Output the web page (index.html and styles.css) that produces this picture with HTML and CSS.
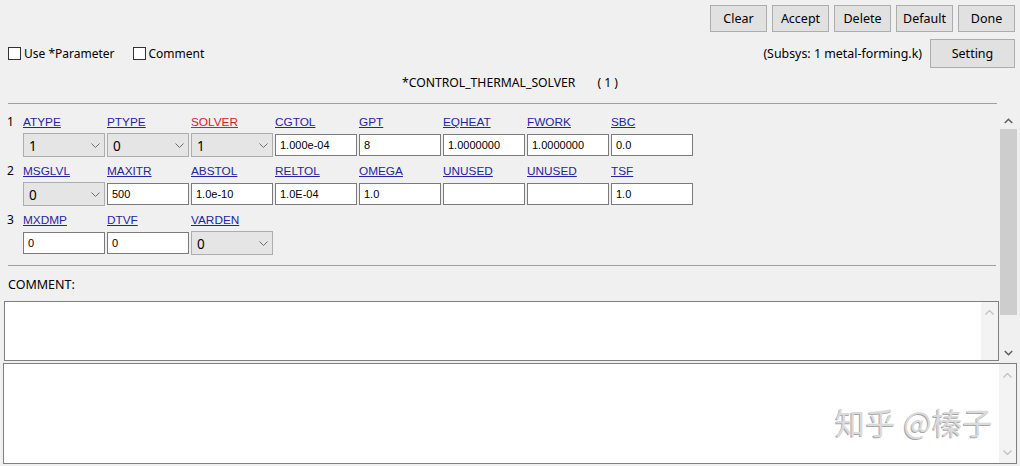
FILE: index.html
```html
<!DOCTYPE html>
<html>
<head>
<meta charset="utf-8">
<link rel="stylesheet" href="styles.css">
</head>
<body>
<div class="page">
  <div class="top">
    <button class="btn">Clear</button>
    <button class="btn">Accept</button>
    <button class="btn">Delete</button>
    <button class="btn">Default</button>
    <button class="btn">Done</button>
  </div>
  <div class="opts">
    <label class="chk"><span class="box"></span>Use *Parameter</label>
    <label class="chk"><span class="box"></span>Comment</label>
    <span class="spacer"></span>
    <span class="subsys">(Subsys: 1 metal-forming.k)</span>
    <button class="btn setting">Setting</button>
  </div>
  <div class="title">*CONTROL_THERMAL_SOLVER<span class="idx">( 1 )</span></div>
  <div class="rule rule-top"></div>
  <div class="main">
    <div class="content">
      <div class="rec">
        <div class="num">1</div>
        <div class="field"><span class="lbl">ATYPE</span><div class="sel"><span>1</span><svg class="chev" width="9" height="5" viewBox="0 0 9 5"><polyline points="0.5,0.5 4.5,4.5 8.5,0.5" fill="none" stroke="#6d6d6d" stroke-width="1"/></svg></div></div>
        <div class="field"><span class="lbl">PTYPE</span><div class="sel"><span>0</span><svg class="chev" width="9" height="5" viewBox="0 0 9 5"><polyline points="0.5,0.5 4.5,4.5 8.5,0.5" fill="none" stroke="#6d6d6d" stroke-width="1"/></svg></div></div>
        <div class="field"><span class="lbl red">SOLVER</span><div class="sel"><span>1</span><svg class="chev" width="9" height="5" viewBox="0 0 9 5"><polyline points="0.5,0.5 4.5,4.5 8.5,0.5" fill="none" stroke="#6d6d6d" stroke-width="1"/></svg></div></div>
        <div class="field"><span class="lbl">CGTOL</span><div class="inp">1.000e-04</div></div>
        <div class="field"><span class="lbl">GPT</span><div class="inp">8</div></div>
        <div class="field"><span class="lbl">EQHEAT</span><div class="inp">1.0000000</div></div>
        <div class="field"><span class="lbl">FWORK</span><div class="inp">1.0000000</div></div>
        <div class="field"><span class="lbl">SBC</span><div class="inp">0.0</div></div>
      </div>
      <div class="rec">
        <div class="num">2</div>
        <div class="field"><span class="lbl">MSGLVL</span><div class="sel"><span>0</span><svg class="chev" width="9" height="5" viewBox="0 0 9 5"><polyline points="0.5,0.5 4.5,4.5 8.5,0.5" fill="none" stroke="#6d6d6d" stroke-width="1"/></svg></div></div>
        <div class="field"><span class="lbl">MAXITR</span><div class="inp">500</div></div>
        <div class="field"><span class="lbl">ABSTOL</span><div class="inp">1.0e-10</div></div>
        <div class="field"><span class="lbl">RELTOL</span><div class="inp">1.0E-04</div></div>
        <div class="field"><span class="lbl">OMEGA</span><div class="inp">1.0</div></div>
        <div class="field"><span class="lbl">UNUSED</span><div class="inp"></div></div>
        <div class="field"><span class="lbl">UNUSED</span><div class="inp"></div></div>
        <div class="field"><span class="lbl">TSF</span><div class="inp">1.0</div></div>
      </div>
      <div class="rec">
        <div class="num">3</div>
        <div class="field"><span class="lbl">MXDMP</span><div class="inp">0</div></div>
        <div class="field"><span class="lbl">DTVF</span><div class="inp">0</div></div>
        <div class="field"><span class="lbl">VARDEN</span><div class="sel"><span>0</span><svg class="chev" width="9" height="5" viewBox="0 0 9 5"><polyline points="0.5,0.5 4.5,4.5 8.5,0.5" fill="none" stroke="#6d6d6d" stroke-width="1"/></svg></div></div>
      </div>
      <div class="rule rule-mid"></div>
      <div class="cmt-label">COMMENT:</div>
      <div class="textbox comment-box">
        <div class="tb-body"></div>
        <div class="tb-scroll">
          <svg width="9" height="5" viewBox="0 0 9 5"><polyline points="0.5,4.5 4.5,0.5 8.5,4.5" fill="none" stroke="#c2c2c2" stroke-width="1.4"/></svg>
        </div>
      </div>
    </div>
    <div class="vscroll">
      <div class="arrow"><svg width="9" height="6" viewBox="0 0 9 6"><polyline points="0.8,5 4.5,1.3 8.2,5" fill="none" stroke="#606060" stroke-width="1.6"/></svg></div>
      <div class="thumb"></div>
      <div class="track"></div>
      <div class="arrow"><svg width="9" height="6" viewBox="0 0 9 6"><polyline points="0.8,1 4.5,4.7 8.2,1" fill="none" stroke="#606060" stroke-width="1.6"/></svg></div>
    </div>
  </div>
  <div class="textbox bottom-box">
    <div class="tb-body"></div>
    <div class="tb-scroll full">
      <svg width="9" height="5" viewBox="0 0 9 5"><polyline points="0.5,4.5 4.5,0.5 8.5,4.5" fill="none" stroke="#c2c2c2" stroke-width="1.4"/></svg>
      <svg width="9" height="5" viewBox="0 0 9 5"><polyline points="0.5,0.5 4.5,4.5 8.5,0.5" fill="none" stroke="#c2c2c2" stroke-width="1.4"/></svg>
    </div>
  </div>
  <div class="watermark">知乎 @榛子</div>
</div>
</body>
</html>
```

FILE: styles.css
```css
* { box-sizing: border-box; }
html, body { margin: 0; padding: 0; }
body {
  background: #f0f0f0;
  font-family: "Noto Sans", "Open Sans", sans-serif;
  font-size: 12px;
  color: #000;
  width: 1020px;
  height: 466px;
  overflow: hidden;
}
.page {
  width: 1020px;
  height: 466px;
  display: flex;
  flex-direction: column;
  position: relative;
}
.top {
  display: flex;
  justify-content: flex-end;
  gap: 5px;
  padding: 5px 5px 0 0;
}
.btn {
  width: 57px;
  height: 27px;
  background: #e1e1e1;
  border: 1px solid #adadad;
  font: 12.5px "Noto Sans", sans-serif;
  color: #000;
  padding: 0;
  display: flex;
  align-items: center;
  justify-content: center;
}
.opts {
  display: flex;
  align-items: center;
  margin-top: 7px;
  height: 29px;
  padding: 0 5px 0 8px;
}
.chk {
  display: flex;
  align-items: center;
  gap: 3px;
  margin-right: 18px;
}
.box {
  width: 13px;
  height: 13px;
  border: 1px solid #333;
  background: #fff;
}
.spacer { flex: 1; }
.subsys { margin-right: 8px; font-size: 12.4px; }
.btn.setting { width: 85px; height: 29px; }
.title {
  margin-top: 5px;
  height: 20px;
  line-height: 20px;
  text-align: center;
  font-size: 12.2px;
}
.idx { margin-left: 22px; }
.rule { height: 1px; background: #a0a0a0; }
.rule-top { margin: 10px 23px 0 8px; }
.main {
  display: flex;
  height: 257px;
}
.content {
  flex: 1;
  min-width: 0;
  padding-top: 9px;
  display: flex;
  flex-direction: column;
}
.rec {
  display: flex;
  gap: 2px;
  padding-left: 7px;
  height: 49px;
}
.num {
  width: 14px;
  height: 18px;
  line-height: 18px;
}
.field {
  width: 82px;
  display: flex;
  flex-direction: column;
}
.lbl {
  height: 18px;
  line-height: 19px;
  font-family: "Liberation Sans", Arial, sans-serif;
  font-size: 11.8px;
  color: #2424a0;
  text-decoration: underline;
}
.lbl.red { color: #cc2229; }
.inp {
  margin-top: 3px;
  height: 22px;
  background: #fff;
  border: 1px solid #7a7a7a;
  font-family: "Liberation Sans", Arial, sans-serif;
  font-size: 11px;
  line-height: 20px;
  padding-left: 4px;
}
.sel {
  margin-top: 2px;
  height: 24px;
  background: #e5e5e5;
  border: 1px solid #adadad;
  display: flex;
  align-items: center;
  justify-content: space-between;
  padding: 1px 4px 0 5px;
  font-size: 13.5px;
}
.rule-mid { margin: 5px 3px 0 8px; }
.cmt-label {
  margin-top: 10px;
  height: 18px;
  line-height: 18px;
  padding-left: 8px;
  font-size: 12.5px;
}
.textbox {
  border: 1px solid #7f7f7f;
  background: #fff;
  display: flex;
}
.comment-box {
  margin: 7px 0 0 4px;
  height: 60px;
}
.tb-body { flex: 1; }
.tb-scroll {
  width: 17px;
  background: #f3f3f3;
  display: flex;
  flex-direction: column;
  align-items: center;
  padding-top: 8px;
}
.tb-scroll.full {
  justify-content: space-between;
  padding: 9px 0 8px;
}
.vscroll {
  width: 17px;
  margin: 9px 3px 0 1px;
  display: flex;
  flex-direction: column;
  background: #f0f0f0;
}
.arrow {
  height: 16px;
  display: flex;
  align-items: center;
  justify-content: center;
}
.thumb {
  height: 186px;
  background: #cdcdcd;
}
.track { flex: 1; }
.bottom-box {
  margin: 2px 0 0 3px;
  width: 1014px;
  height: 101px;
}
.watermark {
  position: absolute;
  left: 835px;
  top: 403px;
  font-family: "Noto Sans CJK SC", sans-serif;
  font-size: 30px;
  line-height: 36px;
  color: #dadada;
  text-shadow: -1px 1px 0 #a8a8a8;
  letter-spacing: 0.5px;
  white-space: nowrap;
}
```
